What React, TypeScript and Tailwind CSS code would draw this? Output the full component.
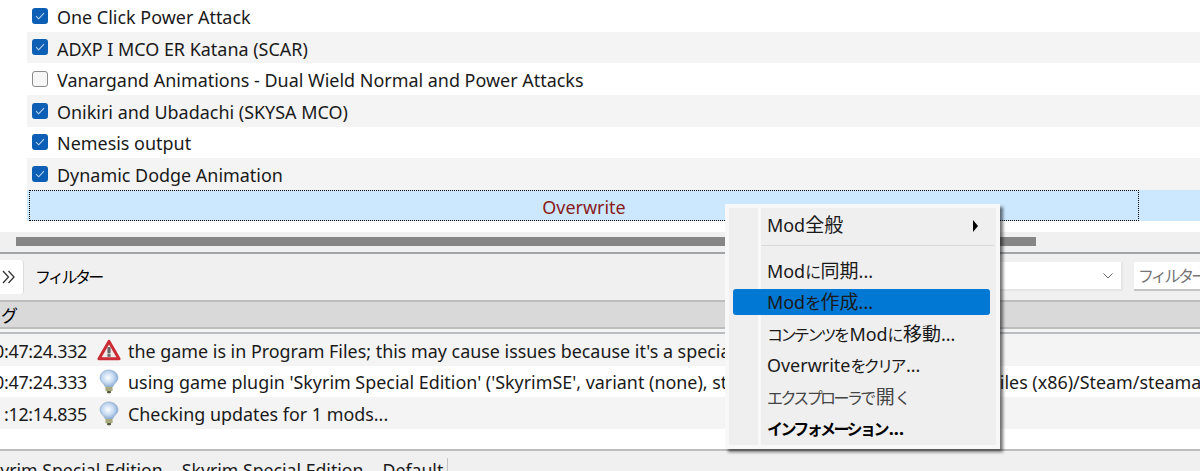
import React from "react";

const font = "font-['Noto_Sans','Noto_Sans_CJK_JP',sans-serif]";

const mods: [string, boolean][] = [
  ["One Click Power Attack", true],
  ["ADXP I MCO ER Katana (SCAR)", true],
  ["Vanargand Animations - Dual Wield Normal and Power Attacks", false],
  ["Onikiri and Ubadachi (SKYSA MCO)", true],
  ["Nemesis output", true],
  ["Dynamic Dodge Animation", true],
];

function Check({ on }: { on: boolean }) {
  if (!on) {
    return <div className="w-4 h-4 rounded-[3px] border border-[#8a8a8a] bg-[#f6f6f6] shrink-0" />;
  }
  return (
    <div className="w-4 h-4 rounded-[3px] bg-[#0c5fb5] shrink-0 flex items-center justify-center">
      <svg width="10" height="8" viewBox="0 0 10 8" fill="none">
        <path d="M1 4.2 L3.7 6.8 L9 1.2" stroke="#b9d3ee" strokeWidth="1.1" />
      </svg>
    </div>
  );
}

function Warn() {
  return (
    <svg width="24" height="22" viewBox="0 0 24 22">
      <path d="M12 2.4 L22 19.8 H2 Z" fill="#efeaea" stroke="#cc2b35" strokeWidth="3" strokeLinejoin="round" />
      <rect x="10.4" y="8" width="3.2" height="6.5" rx="1" fill="#666" />
      <rect x="10.4" y="15.2" width="3.2" height="2.6" fill="#666" />
    </svg>
  );
}

function Bulb({ id }: { id: string }) {
  return (
    <svg width="20" height="25" viewBox="0 0 20 25">
      <defs>
        <radialGradient id={id} cx="0.45" cy="0.45" r="0.6">
          <stop offset="0" stopColor="#ffffff" />
          <stop offset="0.55" stopColor="#c4d9f2" />
          <stop offset="1" stopColor="#7f9fca" />
        </radialGradient>
      </defs>
      <path d="M10 1 C4.5 1 1 4.8 1 9 C1 12.6 5 14.5 6.4 18 H13.6 C15 14.5 19 12.6 19 9 C19 4.8 15.5 1 10 1 Z" fill={`url(#${id})`} stroke="#a0b6d2" strokeWidth="0.8" />
      <rect x="6.4" y="18" width="7.2" height="4.2" rx="1" fill="#a8a97c" />
      <rect x="8" y="22" width="4" height="2.2" rx="1" fill="#55553f" />
    </svg>
  );
}

const logs = [
  { t: "0:47:24.332", icon: <Warn />, msg: "the game is in Program Files; this may cause issues because it's a special system folder", bg: "bg-[#f4f4f4]" },
  { t: "0:47:24.333", icon: <Bulb id="b1" />, msg: "using game plugin 'Skyrim Special Edition' ('SkyrimSE', variant (none), steam id '489830') at C:/Program Files (x86)/Steam/steamapps/common", bg: "bg-white" },
  { t: ":12:14.835", icon: <Bulb id="b2" />, msg: "Checking updates for 1 mods...", bg: "bg-[#f4f4f4]" },
];

/* Kana in the reference are set narrow, kanji a little larger than the Latin text. */
function Ka({ children }: { children: React.ReactNode }) {
  return <span className="text-[16px] tracking-[-2.6px] mr-[2px]">{children}</span>;
}
function Kj({ children }: { children: React.ReactNode }) {
  return <span className="text-[19px]">{children}</span>;
}

function MenuItem({ className = "h-[31.5px]", children, after }: { className?: string; children: React.ReactNode; after?: React.ReactNode }) {
  return (
    <div className={`flex items-center pl-[34px] pr-[12px] justify-between ml-[4px] mr-[6px] rounded-[3px] whitespace-nowrap leading-none ${className}`}>
      <span>{children}</span>
      {after}
    </div>
  );
}

export default function App() {
  return (
    <div className={`relative w-[1200px] h-[471px] overflow-hidden bg-white text-[#1a1a1a] text-[17.95px] ${font}`}>
      <div className="pl-[27px]">
        {mods.map(([name, on], i) => (
          <div key={name} className={`h-[31.67px] flex items-center pl-[5px] gap-[9px] whitespace-nowrap ${i % 2 ? "bg-[#f4f4f4]" : "bg-white"}`}>
            <Check on={on} />
            <span className="pt-[3px]">{name}</span>
          </div>
        ))}
        <div className="h-[31px] bg-[#cce8ff] pl-[2px] pr-[61px] flex">
          <div className="flex-1 border border-dotted border-black flex items-center justify-center text-[#8b1a1a] pt-[4px]">Overwrite</div>
        </div>
      </div>

      <div className="mt-[11px] h-[20px] bg-[#f0f0f0] pl-[16px] pr-[164px] pt-[5px]">
        <div className="h-[9px] bg-[#868686]" />
      </div>
      <div className="h-[2px] bg-[#a3a6a8]" />

      <div className="h-[46px] bg-[#f0f0f0] flex items-center">
        <div className="w-[24px] h-[34px] bg-white rounded-r-[3px] border-r border-[#dcdcdc] flex items-center justify-end pr-[8px] shrink-0">
          <svg width="13" height="14" viewBox="0 0 13 14" fill="none" stroke="#333" strokeWidth="1.3">
            <path d="M1 1 L6.5 7 L1 13" />
            <path d="M6.5 1 L12 7 L6.5 13" />
          </svg>
        </div>
        <span className="ml-[11px] text-black"><Ka>フィルター</Ka></span>
        <div className="ml-auto w-[363px] h-[29px] bg-white border-b-2 border-r-2 border-[#e6e6e6] rounded-[2px] flex items-center justify-end pr-[8px]">
          <svg width="10" height="6" viewBox="0 0 10 6" fill="none" stroke="#666" strokeWidth="1">
            <path d="M0.5 0.5 L5 5 L9.5 0.5" />
          </svg>
        </div>
        <div className="ml-[11px] w-[66px] h-[29px] bg-white border-b-2 border-[#c4c4c4] flex items-center pl-[4px] overflow-hidden whitespace-nowrap text-[#757575]">
          <Ka>フィルター</Ka>
        </div>
      </div>

      <div className="h-[29px] bg-[#d9d9d9] border-y-2 border-[#bdbdbd] flex items-center overflow-hidden">
        <span className="text-[17px] ml-[-16px] pt-[2px] text-black whitespace-nowrap">ログ</span>
      </div>
      <div className="h-[3px] bg-[#f4f4f4]" />
      <div className="h-[2px] bg-[#b9bcc0]" />

      <div className="bg-white h-[115px] text-[17.9px]">
        {logs.map((l) => (
          <div key={l.t} className={`h-[31.67px] flex items-center whitespace-nowrap overflow-hidden ${l.bg}`}>
            <div className="w-[87px] shrink-0 flex justify-end overflow-hidden pt-[3px]">
              <span className="shrink-0 tracking-[-0.3px]">{l.t}</span>
            </div>
            <div className="w-[41px] shrink-0 flex justify-center pl-[3px]">{l.icon}</div>
            <span className="pt-[3px]">{l.msg}</span>
          </div>
        ))}
      </div>

      <div className="h-[2px] bg-[#bdbdbd]" />
      <div className="h-[21px] bg-[#f0f0f0] flex whitespace-nowrap overflow-hidden pt-[7px] leading-[24px] text-[17.7px]">
        <span className="ml-[-19px] shrink-0">Skyrim Special Edition</span>
        <span className="ml-[19px] shrink-0">Skyrim Special Edition</span>
        <span className="ml-[19px] shrink-0">Default</span>
        <span className="ml-[4px] w-px h-[20px] bg-[#c4c4c4]" />
      </div>

      <div className="absolute left-[725px] top-[204px] w-[275px] h-[245px] bg-[#f8f8f8] shadow-[3px_3px_3px_rgba(0,0,0,0.55)] p-[4px] text-[#1a1a1a]">
        <div className="relative h-full bg-[#efefef]">
          <div className="absolute left-[29px] top-0 bottom-0 w-[3px] bg-[#f8f8f8]" />
          <div className="relative pt-[2px]">
            <MenuItem after={<span className="w-0 h-0 border-y-[6px] border-y-transparent border-l-[5px] border-l-black" />}>
              Mod<Kj>全般</Kj>
            </MenuItem>
            <div className="ml-[32px] mr-[2px] h-px bg-[#d9d9d9] mt-[3px] mb-[10px]" />
            <MenuItem>Mod<Ka>に</Ka><Kj>同期</Kj>...</MenuItem>
            <MenuItem className="h-[26px] bg-[#0078d4] mt-[2px] mb-[4px]">Mod<Ka>を</Ka><Kj>作成</Kj>...</MenuItem>
            <MenuItem><Ka>コンテンツを</Ka>Mod<Ka>に</Ka><Kj>移動</Kj>...</MenuItem>
            <MenuItem>Overwrite<Ka>をクリア</Ka>...</MenuItem>
            <MenuItem className="h-[31.5px] text-[#444]"><Ka>エクスプローラで</Ka><Kj>開</Kj><Ka>く</Ka></MenuItem>
            <MenuItem className="h-[31.5px] font-bold text-black"><Ka>インフォメーション</Ka>...</MenuItem>
          </div>
        </div>
      </div>
    </div>
  );
}
